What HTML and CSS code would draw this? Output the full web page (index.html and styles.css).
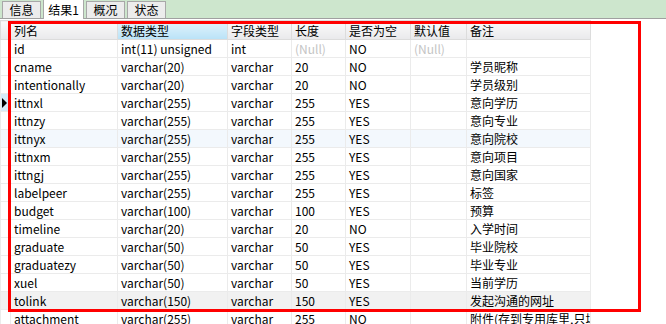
FILE: index.html
```html
<!DOCTYPE html>
<html lang="zh">

<head>
    <meta charset="UTF-8">
    <title>结果1</title>
    <link rel="stylesheet" href="styles.css">
</head>

<body>
    <div class="tabs">
        <div class="tab">信息</div>
        <div class="tab active">结果1</div>
        <div class="tab">概况</div>
        <div class="tab">状态</div>
    </div>

    <div class="grid-wrap">
        <table class="grid">
            <colgroup>
                <col style="width: 10px">
                <col style="width: 107px">
                <col style="width: 110px">
                <col style="width: 64px">
                <col style="width: 54px">
                <col style="width: 65px">
                <col style="width: 56px">
                <col style="width: 124px">
            </colgroup>
            <thead>
                <tr>
                    <th class="ind"></th>
                    <th>列名</th>
                    <th class="sorted">数据类型</th>
                    <th>字段类型</th>
                    <th>长度</th>
                    <th>是否为空</th>
                    <th>默认值</th>
                    <th>备注</th>
                </tr>
            </thead>
            <tbody id="rows">
                <!-- filled by script -->
            </tbody>
        </table>

        <!-- red highlight box drawn over the grid -->
        <div class="mark"></div>
    </div>

    <script>
        const rows = [
            ['id', 'int(11) unsigned', 'int', null, 'NO', null, ''],
            ['cname', 'varchar(20)', 'varchar', '20', 'NO', '', '学员昵称'],
            ['intentionally', 'varchar(20)', 'varchar', '20', 'NO', '', '学员级别'],
            ['ittnxl', 'varchar(255)', 'varchar', '255', 'YES', '', '意向学历'],
            ['ittnzy', 'varchar(255)', 'varchar', '255', 'YES', '', '意向专业'],
            ['ittnyx', 'varchar(255)', 'varchar', '255', 'YES', '', '意向院校'],
            ['ittnxm', 'varchar(255)', 'varchar', '255', 'YES', '', '意向项目'],
            ['ittngj', 'varchar(255)', 'varchar', '255', 'YES', '', '意向国家'],
            ['labelpeer', 'varchar(255)', 'varchar', '255', 'YES', '', '标签'],
            ['budget', 'varchar(100)', 'varchar', '100', 'YES', '', '预算'],
            ['timeline', 'varchar(20)', 'varchar', '20', 'NO', '', '入学时间'],
            ['graduate', 'varchar(50)', 'varchar', '50', 'YES', '', '毕业院校'],
            ['graduatezy', 'varchar(50)', 'varchar', '50', 'YES', '', '毕业专业'],
            ['xuel', 'varchar(50)', 'varchar', '50', 'YES', '', '当前学历'],
            ['tolink', 'varchar(150)', 'varchar', '150', 'YES', '', '发起沟通的网址'],
            ['attachment', 'varchar(255)', 'varchar', '255', 'NO', '', '附件(存到专用库里,只填id,\',\')']
        ];

        const tbody = document.getElementById('rows');

        rows.forEach((r, i) => {
            const tr = document.createElement('tr');
            if (i === 3) tr.className = 'current';
            else if (i === 5) tr.className = 'alt';
            else if (i === 14) tr.className = 'grey';

            let html = `<td class="ind">${i === 3 ? '<span class="arrow"></span>' : ''}</td>`;
            r.forEach(v => {
                if (v === null) html += '<td class="null">(Null)</td>';
                else html += `<td>${v}</td>`;
            });
            tr.innerHTML = html;
            tbody.appendChild(tr);
        });
    </script>
</body>

</html>
```

FILE: styles.css
```css
body {
    margin: 0;
    font-family: "Noto Sans CJK SC", "Liberation Sans", sans-serif;
    font-size: 12px;
    color: #000;
    background-color: #fff;
    width: 666px;
    height: 324px;
    overflow: hidden;
}

.tabs {
    display: flex;
    align-items: flex-end;
    height: 18px;
    padding-left: 2px;
    background-color: #cde6cd;
    border-bottom: 1px solid #a0a0a0;
}

.tab {
    height: 16px;
    line-height: 16px;
    width: 37px;
    margin-right: 2px;
    text-align: center;
    background-color: #ececec;
    border: 1px solid #a8a8a8;
    border-bottom: none;
    box-sizing: content-box;
}

.tab.active {
    height: 19px;
    line-height: 19px;
    width: 39px;
    margin-bottom: -1px;
    background-color: #fff;
}

.grid-wrap {
    position: relative;
    padding-top: 1px;
}

.grid {
    border-collapse: collapse;
    table-layout: fixed;
    width: 590px;
}

.grid th,
.grid td {
    height: 17px;
    padding: 0 3px;
    border: 1px solid #ebebeb;
    text-align: left;
    white-space: nowrap;
    overflow: hidden;
    font-weight: normal;
    line-height: 17px;
}

.grid th {
    height: 18px;
    background: linear-gradient(#fbfbfb, #e9e9eb);
    border-color: #dcdcdc;
}

.grid th.sorted {
    background: linear-gradient(#e3f3fc, #b9e2f7);
}

.grid .ind {
    padding: 0;
    position: relative;
    background: #fff;
}

.grid th.ind {
    background: linear-gradient(#fbfbfb, #e9e9eb);
}

.grid td.null {
    color: #c4c4c4;
}

.grid tr.alt td {
    background-color: #f3f8fd;
}

.grid tr.grey td {
    background-color: #f1f1f1;
}

.grid tr.current td.ind {
    background-color: #d6ebf8;
}

.arrow {
    position: absolute;
    left: 1px;
    top: 4px;
    width: 0;
    height: 0;
    border-top: 5px solid transparent;
    border-bottom: 5px solid transparent;
    border-left: 5px solid #000;
}

.mark {
    position: absolute;
    left: 8px;
    top: 2px;
    width: 627px;
    height: 285px;
    border: 3px solid #f00;
    pointer-events: none;
}
```
